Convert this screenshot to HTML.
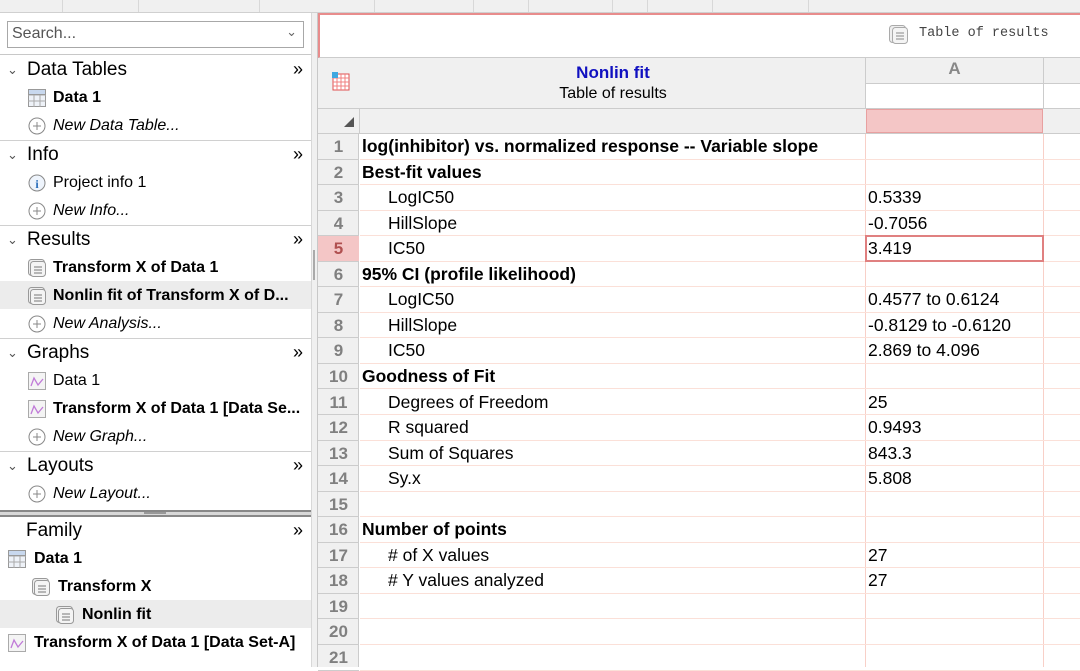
<!DOCTYPE html>
<html><head><meta charset="utf-8"><style>
*{margin:0;padding:0;box-sizing:border-box}
body{width:1080px;height:667px;overflow:hidden;background:#fff;font-family:"Liberation Sans",sans-serif;position:relative;color:#000}
.abs{position:absolute}
.top{left:0;top:0;width:1080px;height:13px;background:#f0f0f0;border-bottom:1px solid #d0d0d0}
.top i{position:absolute;top:0;width:1px;height:12px;background:#d8d8d8}
.left{left:0;top:13px;width:311px;height:654px;background:#fff}
.sb{left:311px;top:13px;width:7px;height:654px;background:#f0f0f0;border-left:1px solid #d8d8d8;border-right:1px solid #c8c8c8}
.search{left:7px;top:21px;width:297px;height:27px;border:1px solid #a8a8a8;font-size:16px;color:#555;padding:3px 4px}
.row{position:absolute;left:0;width:311px;height:28px;font-size:16px;line-height:29px;white-space:nowrap;overflow:hidden}
.hd{font-size:19px}
.hd .chev{position:absolute;left:7px;top:0;font-size:13px;color:#555}
.hd .t{position:absolute;left:27px}
.hd .r{position:absolute;right:8px;font-size:18px}
.it .t{position:absolute;left:53px}
.ic{position:absolute;left:28px;top:6px;width:18px;height:18px}
.sep{position:absolute;left:0;width:311px;height:1px;background:#d0d0d0}
.sel{background:#ececec}
b{font-weight:bold}
em{font-style:italic}
.grid .c{position:absolute;font-size:17.5px;line-height:25px;white-space:nowrap}
</style></head><body>
<div class="abs top"><i style="left:62px"></i><i style="left:138px"></i><i style="left:259px"></i><i style="left:374px"></i><i style="left:473px"></i><i style="left:528px"></i><i style="left:612px"></i><i style="left:647px"></i><i style="left:712px"></i><i style="left:808px"></i></div>
<div class="abs left"></div>
<div class="abs search">Search...<span style="position:absolute;right:6px;top:2px;font-size:13px;color:#666">&#8964;</span></div>
<div class="abs" style="left:0;top:54px;width:311px;height:1px;background:#c8c8c8"></div>

<div class="row hd" style="top:55px"><span class="chev">&#8964;</span><span class="t">Data Tables</span><span class="r">»</span></div>
<div class="row it" style="top:83px"><svg class="ic" viewBox="0 0 18 18"><rect x="0.5" y="0.5" width="17" height="17" fill="#eef2f8" stroke="#999"/><path d="M0 6h18M0 12h18M6 0v18M12 0v18" stroke="#aaa"/><rect x="0.5" y="0.5" width="17" height="5" fill="#c8d8ee" stroke="#999"/></svg><span class="t"><b>Data 1</b></span></div>
<div class="row it" style="top:111px"><svg class="ic" viewBox="0 0 18 18"><circle cx="9" cy="9" r="8" fill="none" stroke="#888"/><path d="M9 5v8M5 9h8" stroke="#888"/></svg><span class="t"><em>New Data Table...</em></span></div>
<div class="sep" style="top:140px"></div>
<div class="row hd" style="top:140px"><span class="chev">&#8964;</span><span class="t">Info</span><span class="r">»</span></div>
<div class="row it" style="top:168px"><svg class="ic" viewBox="0 0 18 18"><circle cx="9" cy="9" r="8" fill="#eef4fc" stroke="#888"/><text x="9" y="14" font-size="12" font-family="Liberation Serif" text-anchor="middle" fill="#2a6ebb" font-weight="bold">i</text></svg><span class="t">Project info 1</span></div>
<div class="row it" style="top:196px"><svg class="ic" viewBox="0 0 18 18"><circle cx="9" cy="9" r="8" fill="none" stroke="#888"/><path d="M9 5v8M5 9h8" stroke="#888"/></svg><span class="t"><em>New Info...</em></span></div>
<div class="sep" style="top:225px"></div>
<div class="row hd" style="top:225px"><span class="chev">&#8964;</span><span class="t">Results</span><span class="r">»</span></div>
<div class="row it" style="top:253px"><svg class="ic" viewBox="0 0 18 18"><rect x="0.5" y="0.5" width="16" height="16" rx="3" fill="#eee" stroke="#999"/><rect x="2.5" y="2.5" width="15" height="15" rx="3" fill="#f4f4f4" stroke="#999"/><path d="M6 8h8M6 11h8M6 14h8" stroke="#777"/></svg><span class="t"><b>Transform X of Data 1</b></span></div>
<div class="row it sel" style="top:281px"><svg class="ic" viewBox="0 0 18 18"><rect x="0.5" y="0.5" width="16" height="16" rx="3" fill="#eee" stroke="#999"/><rect x="2.5" y="2.5" width="15" height="15" rx="3" fill="#f4f4f4" stroke="#999"/><path d="M6 8h8M6 11h8M6 14h8" stroke="#777"/></svg><span class="t"><b>Nonlin fit of Transform X of D...</b></span></div>
<div class="row it" style="top:309px"><svg class="ic" viewBox="0 0 18 18"><circle cx="9" cy="9" r="8" fill="none" stroke="#888"/><path d="M9 5v8M5 9h8" stroke="#888"/></svg><span class="t"><em>New Analysis...</em></span></div>
<div class="sep" style="top:338px"></div>
<div class="row hd" style="top:338px"><span class="chev">&#8964;</span><span class="t">Graphs</span><span class="r">»</span></div>
<div class="row it" style="top:366px"><svg class="ic" viewBox="0 0 18 18"><rect x="0.5" y="0.5" width="17" height="17" fill="#f4f4f4" stroke="#aaa"/><path d="M3 14L6 6l4 7 5-6" fill="none" stroke="#c07ad8" stroke-width="1.3"/></svg><span class="t">Data 1</span></div>
<div class="row it" style="top:394px"><svg class="ic" viewBox="0 0 18 18"><rect x="0.5" y="0.5" width="17" height="17" fill="#f4f4f4" stroke="#aaa"/><path d="M3 14L6 6l4 7 5-6" fill="none" stroke="#c07ad8" stroke-width="1.3"/></svg><span class="t"><b>Transform X of Data 1 [Data Se...</b></span></div>
<div class="row it" style="top:422px"><svg class="ic" viewBox="0 0 18 18"><circle cx="9" cy="9" r="8" fill="none" stroke="#888"/><path d="M9 5v8M5 9h8" stroke="#888"/></svg><span class="t"><em>New Graph...</em></span></div>
<div class="sep" style="top:451px"></div>
<div class="row hd" style="top:451px"><span class="chev">&#8964;</span><span class="t">Layouts</span><span class="r">»</span></div>
<div class="row it" style="top:479px"><svg class="ic" viewBox="0 0 18 18"><circle cx="9" cy="9" r="8" fill="none" stroke="#888"/><path d="M9 5v8M5 9h8" stroke="#888"/></svg><span class="t"><em>New Layout...</em></span></div>
<div class="abs" style="left:0;top:510px;width:311px;height:7px;background:#d8d8d8;border-top:2px solid #888;border-bottom:2px solid #888"></div>
<div class="abs" style="left:144px;top:512px;width:22px;height:2px;background:#999"></div>
<div class="row hd" style="top:516px"><span class="t" style="left:26px">Family</span><span class="r">»</span></div>
<div class="row it" style="top:544px"><svg class="ic" style="left:8px" viewBox="0 0 18 18"><rect x="0.5" y="0.5" width="17" height="17" fill="#eef2f8" stroke="#999"/><path d="M0 6h18M0 12h18M6 0v18M12 0v18" stroke="#aaa"/><rect x="0.5" y="0.5" width="17" height="5" fill="#c8d8ee" stroke="#999"/></svg><span class="t" style="left:34px"><b>Data 1</b></span></div>
<div class="row it" style="top:572px"><svg class="ic" style="left:32px" viewBox="0 0 18 18"><rect x="0.5" y="0.5" width="16" height="16" rx="3" fill="#eee" stroke="#999"/><rect x="2.5" y="2.5" width="15" height="15" rx="3" fill="#f4f4f4" stroke="#999"/><path d="M6 8h8M6 11h8M6 14h8" stroke="#777"/></svg><span class="t" style="left:58px"><b>Transform X</b></span></div>
<div class="row it sel" style="top:600px"><svg class="ic" style="left:56px" viewBox="0 0 18 18"><rect x="0.5" y="0.5" width="16" height="16" rx="3" fill="#eee" stroke="#999"/><rect x="2.5" y="2.5" width="15" height="15" rx="3" fill="#f4f4f4" stroke="#999"/><path d="M6 8h8M6 11h8M6 14h8" stroke="#777"/></svg><span class="t" style="left:82px"><b>Nonlin fit</b></span></div>
<div class="row it" style="top:628px"><svg class="ic" style="left:8px" viewBox="0 0 18 18"><rect x="0.5" y="0.5" width="17" height="17" fill="#f4f4f4" stroke="#aaa"/><path d="M3 14L6 6l4 7 5-6" fill="none" stroke="#c07ad8" stroke-width="1.3"/></svg><span class="t" style="left:34px"><b>Transform X of Data 1 [Data Set-A]</b></span></div>

<div class="abs sb"></div>
<div class="abs" style="left:313px;top:250px;width:2px;height:30px;background:#aaa"></div>

<div class="abs" style="left:318px;top:13px;width:762px;height:45px;background:#fff;border-top:2px solid #e88c8c;border-left:2px solid #e88c8c;border-bottom:1px solid #ccc"></div>
<svg class="abs" style="left:889px;top:25px" width="20" height="20" viewBox="0 0 20 20"><rect x="0.5" y="0.5" width="16" height="17" rx="3" fill="#eee" stroke="#aaa"/><rect x="3.5" y="2.5" width="15" height="16" rx="3" fill="#f4f4f4" stroke="#aaa"/><path d="M7 8h8M7 11h8M7 14h8" stroke="#888"/></svg>
<div class="abs" style="left:919px;top:26px;font-family:'Liberation Mono',monospace;font-size:13.5px;color:#444">Table of results</div>

<div class="abs" style="left:318px;top:58px;width:548px;height:50px;background:#f0f0f0;border-right:1px solid #ccc"></div>
<div class="abs" style="left:866px;top:58px;width:214px;height:25px;background:#f0f0f0"></div>
<div class="abs" style="left:866px;top:83px;width:214px;height:25px;background:#fff;border-top:1px solid #ccc"></div>
<div class="abs" style="left:1043px;top:58px;width:1px;height:50px;background:#ccc"></div>
<div class="abs" style="left:866px;top:59px;width:177px;text-align:center;font-size:17px;font-weight:bold;color:#888">A</div>
<div class="abs" style="left:360px;top:63px;width:506px;text-align:center;font-size:17px;font-weight:bold;color:#1010c0">Nonlin fit</div>
<div class="abs" style="left:360px;top:85px;width:506px;text-align:center;font-size:16px">Table of results</div>
<svg class="abs" style="left:330px;top:70px" width="22" height="22" viewBox="0 0 22 22"><rect x="3" y="4" width="16" height="16" fill="#fff" stroke="#e05050"/><path d="M3 8h16M3 12h16M3 16h16M7 4v16M11 4v16M15 4v16" stroke="#f08080"/><rect x="2" y="2" width="6" height="6" fill="#40a8e0"/></svg>
<div class="abs" style="left:318px;top:108px;width:762px;height:26px;background:#f0f0f0;border-top:1px solid #ccc;border-bottom:1px solid #ccc"></div>
<div class="abs" style="left:866px;top:109px;width:177px;height:24px;background:#f4c6c6;border:1px solid #e8a0a0"></div>
<div class="abs" style="left:359px;top:108px;width:1px;height:26px;background:#ccc"></div>
<svg class="abs" style="left:343px;top:116px" width="12" height="12"><path d="M11 1V11H1Z" fill="#555"/></svg>

<div class="abs" style="left:318px;top:134px;width:41px;height:533px;background:#f0f0f0;border-right:1px solid #ccc"></div>
<div class="abs" style="left:865px;top:134px;width:1px;height:533px;background:#f8d0c8"></div>
<div class="abs" style="left:1043px;top:134px;width:1px;height:533px;background:#f8d0c8"></div>

<div class="grid" id="g"></div>
<script>
var rows=[["log(inhibitor) vs. normalized response -- Variable slope","",1],["Best-fit values","",1],["LogIC50","0.5339"],["HillSlope","-0.7056"],["IC50","3.419"],["95% CI (profile likelihood)","",1],["LogIC50","0.4577 to 0.6124"],["HillSlope","-0.8129 to -0.6120"],["IC50","2.869 to 4.096"],["Goodness of Fit","",1],["Degrees of Freedom","25"],["R squared","0.9493"],["Sum of Squares","843.3"],["Sy.x","5.808"],["",""],["Number of points","",1],["# of X values","27"],["# Y values analyzed","27"],["",""],["",""],["",""]];
var h="";
for(var i=0;i<21;i++){var t=134+i*25.55;var r=rows[i];
h+='<div class="abs" style="left:318px;top:'+(t+24.5)+'px;width:41px;height:1px;background:#ccc"></div>';
h+='<div class="abs" style="left:360px;top:'+(t+24.5)+'px;width:720px;height:1px;background:#fbe0d8"></div>';
var nb=i==4?'background:#f4c6c6;color:#b05050;':'color:#808080;';
h+='<div class="c" style="left:318px;top:'+t+'px;width:41px;height:25px;text-align:center;font-size:17px;font-weight:bold;'+nb+'">'+(i+1)+'</div>';
h+='<div class="c" style="left:'+(r[2]?362:388)+'px;top:'+t+'px;'+(r[2]?'font-weight:bold;':'')+'">'+r[0]+'</div>';
h+='<div class="c" style="left:868px;top:'+t+'px">'+r[1]+'</div>';}
document.getElementById('g').innerHTML=h;
</script>
<div class="abs" style="left:865px;top:235px;width:179px;height:27px;border:2px solid #e08080"></div>
</body></html>
